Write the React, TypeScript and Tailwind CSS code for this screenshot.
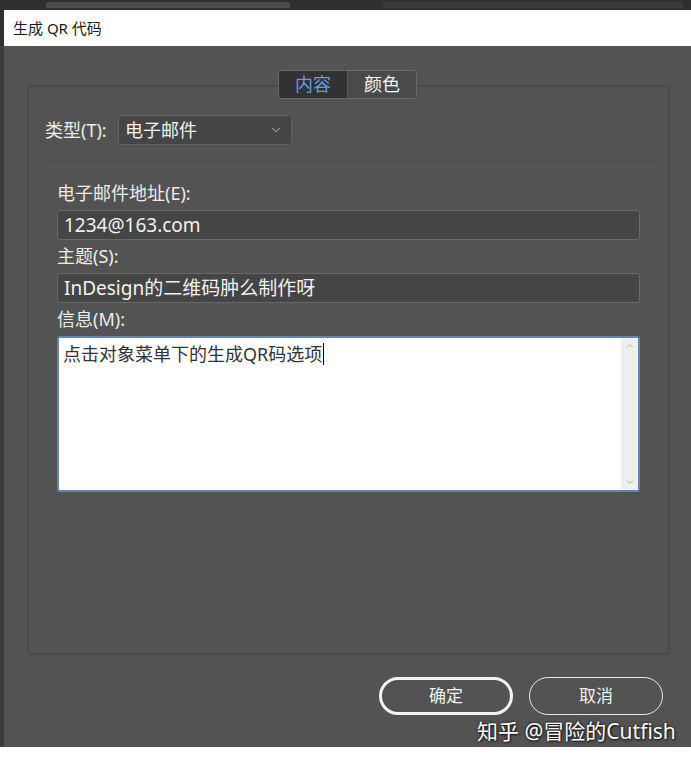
import { ChevronDown, ChevronUp } from 'lucide-react'

const font = { fontFamily: '"Noto Sans", "Noto Sans CJK SC", sans-serif' }

function Field({ label, value }: { label: string; value: string }) {
  return (
    <div className="flex flex-col">
      <label className="flex h-[33px] items-center text-[18px] text-[#ececec]">{label}</label>
      <div className="flex h-[30px] items-center rounded-[3px] border border-[#686868] bg-[#454545] px-[6px] text-[19px] text-[#f2f2f2]">
        {value}
      </div>
    </div>
  )
}

export default function App() {
  return (
    <div className="relative flex h-[759px] w-[691px] flex-col overflow-hidden bg-white" style={font}>
      {/* app chrome behind the dialog */}
      <div className="flex h-[10px] shrink-0 bg-[#2f2f2f]">
        <div className="ml-[46px] mt-[2px] h-[6px] w-[244px] bg-[#4a4a4a]" />
        <div className="ml-auto mr-[8px] mt-[2px] h-[6px] w-[300px] bg-[#3a3a3a]" />
      </div>

      <div className="flex min-h-0 flex-1">
        <div className="flex w-[4px] shrink-0 flex-col">
          <div className="h-[36px] bg-[#2f2f2f]" />
          <div className="flex-1 bg-[#3c3c3c]" />
          <div className="h-[12px] bg-white" />
        </div>

        <div className="flex flex-1 flex-col">
          <div className="flex h-[36px] shrink-0 items-center bg-white pl-[9px] text-[15px] text-[#1a1a1a]">
            生成 QR 代码
          </div>

          <div className="flex flex-1 flex-col bg-[#535353] pl-[23px] pr-[21px] pt-[24px]">
            <div className="relative z-10 flex justify-center">
              <div className="-ml-[2px] flex h-[29px] overflow-hidden rounded-[3px] border border-[#6a6a6a]">
                <div className="flex w-[68px] items-center justify-center bg-[#323232] text-[18px] text-[#5d9fe0]">
                  内容
                </div>
                <div className="flex w-[69px] items-center justify-center border-l border-[#5a5a5a] bg-[#4a4a4a] text-[18px] text-[#f4f4f4]">
                  颜色
                </div>
              </div>
            </div>

            <div className="-mt-[14px] flex h-[570px] flex-col rounded-[4px] border-2 border-[#4a4a4a] px-[14px] pt-[28px]">
              <div className="flex items-center">
                <span className="w-[75px] pl-[2px] text-[18px] text-[#ececec]">类型(T):</span>
                <div className="flex h-[30px] w-[174px] items-center justify-between rounded-[3px] border border-[#626262] bg-[#454545] pl-[6px] pr-[8px] text-[18px] text-[#f2f2f2]">
                  电子邮件
                  <ChevronDown size={14} strokeWidth={1.5} className="text-[#cfcfcf]" />
                </div>
              </div>

              <div className="mx-[-2px] mt-[16px] h-px bg-[#4c4c4c]" />

              <div className="mt-[15px] flex flex-col px-[14px]">
                <Field label="电子邮件地址(E):" value="1234@163.com" />
                <Field label="主题(S):" value="InDesign的二维码肿么制作呀" />
                <div className="flex flex-col">
                  <label className="flex h-[33px] items-center text-[18px] text-[#ececec]">信息(M):</label>
                  <div className="flex h-[156px] rounded-[3px] border-2 border-[#6187b2] bg-white">
                    <div className="flex-1 px-[4px] pt-[1px] text-[18px] leading-[26px] text-[#333]">
                      点击对象菜单下的生成QR码选项
                      <span className="ml-px inline-block h-[22px] w-px translate-y-[4px] bg-black" />
                    </div>
                    <div className="flex w-[17px] flex-col items-center justify-between bg-[#efefef] py-[2px]">
                      <ChevronUp size={12} strokeWidth={2} className="text-[#b8b8b8]" />
                      <ChevronDown size={12} strokeWidth={2} className="text-[#b8b8b8]" />
                    </div>
                  </div>
                </div>
              </div>
            </div>

            <div className="mt-[22px] flex justify-end gap-[16px] pr-[7px]">
              <button className="h-[38px] w-[134px] rounded-full border-[3px] border-[#f2f2f2] text-[17px] text-[#f2f2f2]">
                确定
              </button>
              <button className="h-[38px] w-[134px] rounded-full border border-[#e6e6e6] text-[17px] text-[#f2f2f2]">
                取消
              </button>
            </div>
          </div>

          <div className="h-[12px] shrink-0 bg-white" />
        </div>
      </div>

      {/* watermark */}
      <div
        className="absolute left-[477px] top-[716px] text-[21px] text-white"
        style={{ textShadow: '0 0 3px rgba(0,0,0,0.8), 1px 1px 2px rgba(0,0,0,0.6)' }}
      >
        知乎 @冒险的Cutfish
      </div>
    </div>
  )
}
